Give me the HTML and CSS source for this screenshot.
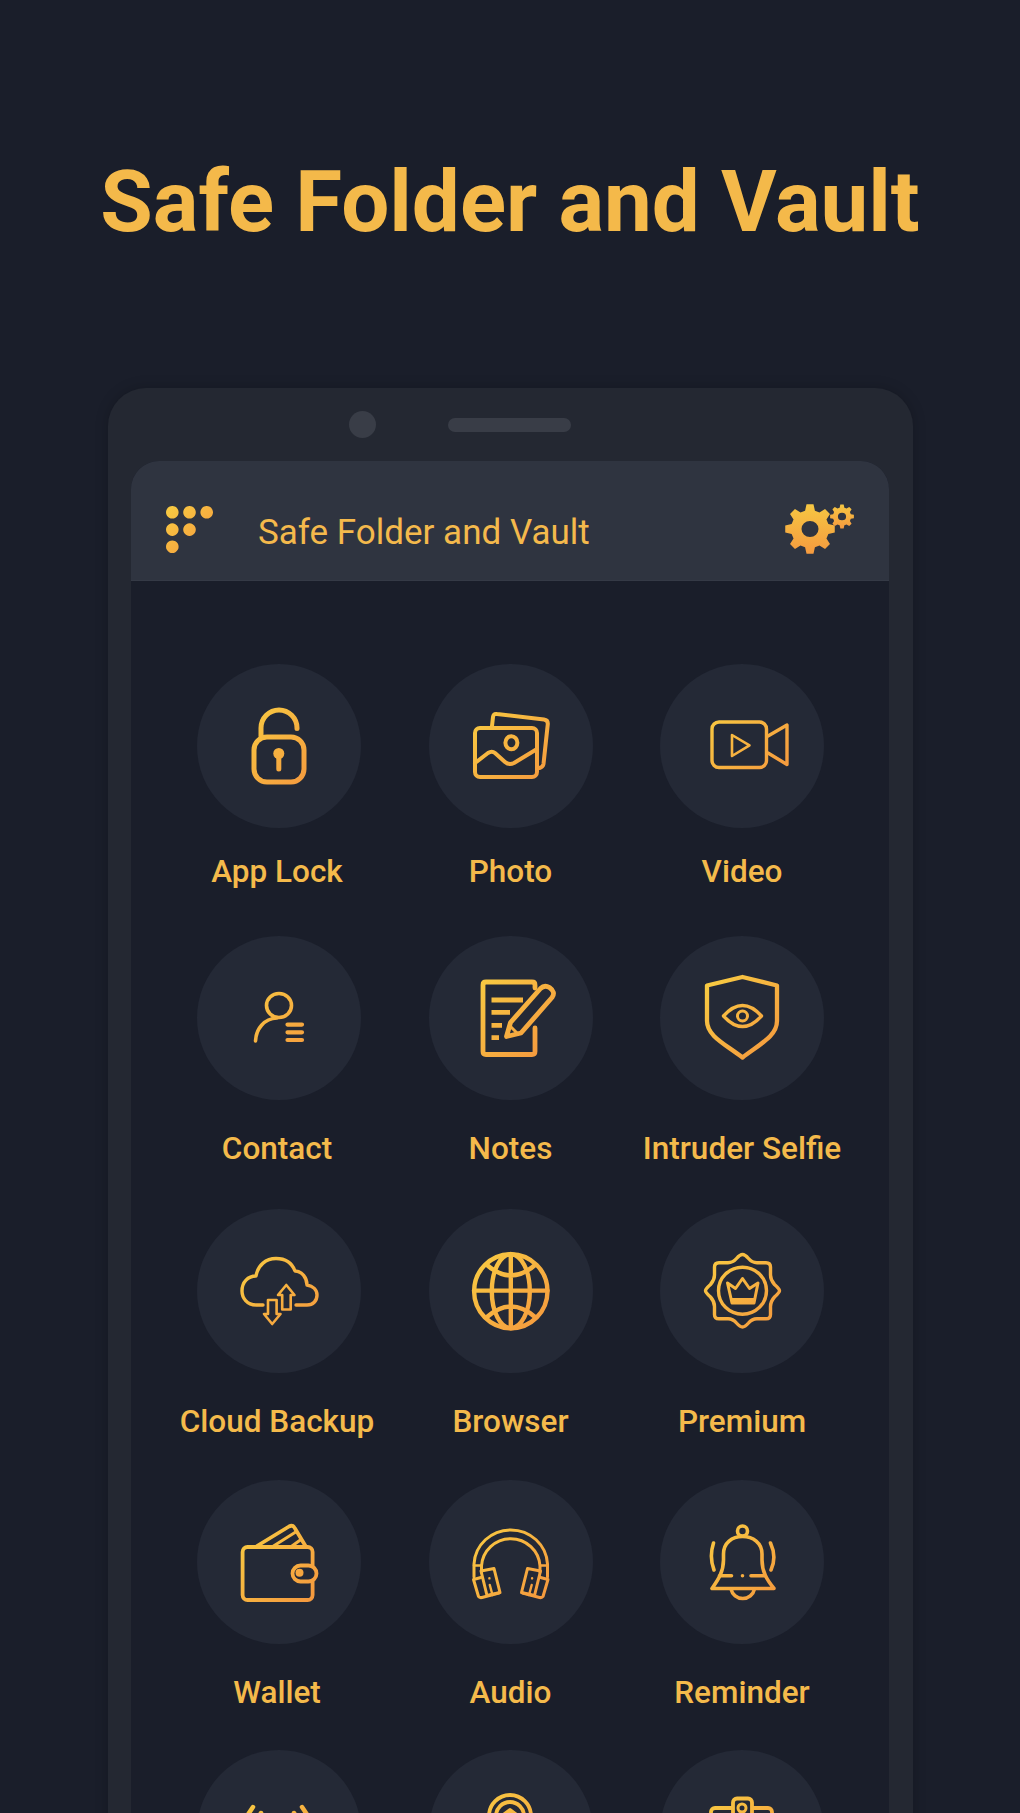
FILE: index.html
```html
<!DOCTYPE html>
<html lang="en">
<head>
  <meta charset="UTF-8">
  <title>Safe Folder and Vault</title>
  <link rel="stylesheet" href="styles.css">
</head>
<body>

  <!-- shared gradients for all the icons -->
  <svg class="defs" width="0" height="0">
    <defs>
      <linearGradient id="gold" gradientUnits="userSpaceOnUse" x1="45" y1="45" x2="120" y2="120">
        <stop offset="0" stop-color="#f8cc42"/>
        <stop offset="1" stop-color="#f5973e"/>
      </linearGradient>
      <linearGradient id="goldDown" x1="0" y1="0" x2="0" y2="1">
        <stop offset="0" stop-color="#f6c742"/>
        <stop offset="1" stop-color="#f59a3f"/>
      </linearGradient>
      <linearGradient id="goldAcross" x1="0" y1="0" x2="1" y2="1">
        <stop offset="0" stop-color="#f8cc42"/>
        <stop offset="1" stop-color="#f5973e"/>
      </linearGradient>
      <path id="gear" fill-rule="evenodd" d="M-4.92-18.35L-3.48-24.76L3.48-24.76L4.92-18.35L9.49-16.45L15.04-19.97L19.97-15.04L16.45-9.49L18.35-4.92L24.76-3.48L24.76 3.48L18.35 4.92L16.45 9.49L19.97 15.04L15.04 19.97L9.49 16.45L4.92 18.35L3.48 24.76L-3.48 24.76L-4.92 18.35L-9.49 16.45L-15.04 19.97L-19.97 15.04L-16.45 9.49L-18.35 4.92L-24.76 3.48L-24.76-3.48L-18.35-4.92L-16.45-9.49L-19.97-15.04L-15.04-19.97L-9.49-16.45ZM-8.5 0a8.5 8 0 1 0 17 0a8.5 8 0 1 0-17 0Z"/>
    </defs>
  </svg>

  <div class="page">
    <h1 class="hero">Safe Folder and Vault</h1>

    <div class="phone">
      <div class="phone-top">
        <span class="camera"></span>
        <span class="speaker"></span>
      </div>

      <div class="screen">
        <header class="appbar">
          <svg class="menu-dots" width="47" height="47" viewBox="0 0 47 47" fill="url(#goldAcross)">
            <path d="M6.3 0a6.3 6.3 0 1 0 .01 0ZM23.5 0a6.3 6.3 0 1 0 .01 0ZM40.7 0a6.3 6.3 0 1 0 .01 0ZM6.3 17.3a6.3 6.3 0 1 0 .01 0ZM23.5 17.3a6.3 6.3 0 1 0 .01 0ZM6.3 34.4a6.3 6.3 0 1 0 .01 0Z"/>
          </svg>
          <span class="appbar-title">Safe Folder and Vault</span>
          <svg class="gears" width="70" height="50" viewBox="0 0 70 50" fill="url(#goldDown)">
            <use href="#gear" transform="translate(25 25)"/>
            <use href="#gear" transform="translate(57 12.5) scale(.48)"/>
          </svg>
        </header>

        <div class="grid">
          <div class="row row-1">
            <div class="tile">
              <div class="bubble">
                <svg class="ico" viewBox="0 0 164 164" stroke="url(#gold)" stroke-width="5">
                  <rect x="57" y="73" width="50" height="45" rx="13"/>
                  <path d="M64 72V64a18 18 0 0 1 36 0v0.5"/>
                  <circle class="solid" cx="81.8" cy="89.5" r="5.5" fill="url(#gold)" stroke="none"/>
                  <path d="M81.8 92V105"/>
                </svg>
              </div>
              <span class="label">App Lock</span>
            </div>
            <div class="tile">
              <div class="bubble">
                <svg class="ico" viewBox="0 0 164 164" stroke="url(#gold)" stroke-width="4">
                  <rect x="46" y="64" width="62" height="49" rx="5"/>
                  <path d="M63 62L64 53Q64.500 49.500 68 50L115 55.500Q119 56 118.800 60L114.500 100Q114 103 110.500 104"/>
                  <path d="M46 99L59 89Q63 86.500 66 89L76 98Q80 101.500 85 99L108 85"/>
                  <ellipse cx="82.400" cy="78.700" rx="6" ry="6.500"/>
                </svg>
              </div>
              <span class="label">Photo</span>
            </div>
            <div class="tile">
              <div class="bubble">
                <svg class="ico" viewBox="0 0 164 164" stroke="url(#gold)" stroke-width="3.400">
                  <rect x="52" y="58" width="54.500" height="45.500" rx="7"/>
                  <path d="M72 71L89.500 81.300L72 92Z" stroke-width="2.600"/>
                  <path d="M108 72L127 61V100.500L108 89"/>
                </svg>
              </div>
              <span class="label">Video</span>
            </div>
          </div>

          <div class="row row-2">
            <div class="tile">
              <div class="bubble">
                <svg class="ico" viewBox="0 0 164 164" stroke="url(#gold)" stroke-width="3.600">
                  <ellipse cx="82" cy="69.500" rx="12.500" ry="12"/>
                  <path d="M58.500 105C59 93 67 82.500 80 82"/>
                  <path d="M90.500 88.600H105M90.500 96.300H105M90.500 104H105" stroke-width="4.200"/>
                </svg>
              </div>
              <span class="label">Contact</span>
            </div>
            <div class="tile">
              <div class="bubble">
                <svg class="ico" viewBox="0 0 164 164" stroke="url(#gold)" stroke-width="4.800">
                  <path d="M106 52V49Q106 46 103 46H57Q54 46 54 49V115.500Q54 118.500 57 118.500H103Q106 118.500 106 115.500V92"/>
                  <path d="M62.500 64H94M62.500 76.300H81M62.500 89.300H73M62.500 101.600H70" stroke-linecap="butt"/>
                  <path d="M77.500 100.500L81.500 86.500L111.500 52.500Q115.500 48.500 120.500 51.500Q127 56 123 61.500L92 97L77.500 100.500Z"/>
                  <path d="M82 91L88 97" stroke-width="3"/>
                </svg>
              </div>
              <span class="label">Notes</span>
            </div>
            <div class="tile">
              <div class="bubble">
                <svg class="ico" viewBox="0 0 164 164" stroke="url(#gold)" stroke-width="4.300">
                  <path d="M82.500 41L117 49.500V85C117 100 100 108 82.500 121.500C65 108 47 100 47 85V49.500Z"/>
                  <path d="M63.500 80Q82.500 59 101.500 80Q82.500 101 63.500 80Z" stroke-width="3.400"/>
                  <circle cx="82.500" cy="80" r="5" stroke-width="3"/>
                </svg>
              </div>
              <span class="label">Intruder Selfie</span>
            </div>
          </div>

          <div class="row row-3">
            <div class="tile">
              <div class="bubble">
                <svg class="ico" viewBox="0 0 164 164" stroke="url(#gold)" stroke-width="3.400">
                  <path d="M66 96H59C50 96 45 89 45 82C45 73 51 67 59 67C61 56 69 49.500 79 49.500C88 49.500 95 54 98 62C105 62 110 69 110 76C116 77 120 81 120 86C120 92 116 96 110 96H99"/>
                  <path d="M89.300 76L97.500 86H93.700V100.500H85.200V86H81Z" stroke-width="2.600"/>
                  <path d="M71 91H79.600V105H83.500L75.200 115L67 105H71Z" stroke-width="2.600"/>
                </svg>
              </div>
              <span class="label">Cloud Backup</span>
            </div>
            <div class="tile">
              <div class="bubble">
                <svg class="ico" viewBox="0 0 164 164" stroke="url(#gold)" stroke-width="4.400">
                  <ellipse cx="81.800" cy="82.200" rx="36.700" ry="37"/>
                  <ellipse cx="81.800" cy="82.200" rx="19" ry="37"/>
                  <path d="M81.800 45V119M45 81.600H118.500M58 56Q82 77 106 56M58 108Q82 87 106 108"/>
                </svg>
              </div>
              <span class="label">Browser</span>
            </div>
            <div class="tile">
              <div class="bubble">
                <svg class="ico" viewBox="0 0 164 164" stroke="url(#gold)" stroke-width="3.400">
                  <path d="M82.500 45.500Q85 45.500 88.500 49.500Q92 53.700 97 53.700H106Q110.500 53.700 110.500 58V66Q110.500 71 114.500 75.500Q119.500 80 119.500 81.700Q119.500 83.400 114.500 88Q110.500 92.500 110.500 97.500V105.500Q110.500 109.800 106 109.800H97Q92 109.800 88.500 114Q85 118 82.500 118Q80 118 76.500 114Q73 109.800 68 109.800H59Q54.500 109.800 54.500 105.500V97.500Q54.500 92.500 50.500 88Q45.500 83.400 45.500 81.700Q45.500 80 50.500 75.500Q54.500 71 54.500 66V58Q54.500 53.700 59 53.700H68Q73 53.700 76.500 49.500Q80 45.500 82.500 45.500Z"/>
                  <ellipse cx="82.500" cy="81.700" rx="24" ry="23.500"/>
                  <path d="M72 94L67.500 74L75.500 79.500L82.500 69.500L89.500 79.500L98 74L94 94Z" stroke-width="3"/>
                  <path d="M72 91.500H94" stroke-width="5" stroke-linecap="butt"/>
                </svg>
              </div>
              <span class="label">Premium</span>
            </div>
          </div>

          <div class="row row-4">
            <div class="tile">
              <div class="bubble">
                <svg class="ico" viewBox="0 0 164 164" stroke="url(#gold)" stroke-width="3.800">
                  <rect x="45.600" y="67" width="70" height="53" rx="5"/>
                  <path d="M60 66L92 46.500Q96 44.500 98 48.500L108.500 66"/>
                  <path d="M76.500 66L99.500 51.500M95 66L104 59.500" stroke-width="3"/>
                  <rect class="clasp" x="95.500" y="85.500" width="24" height="16" rx="8"/>
                  <circle cx="102.500" cy="92.700" r="4" fill="url(#gold)" stroke="none"/>
                </svg>
              </div>
              <span class="label">Wallet</span>
            </div>
            <div class="tile">
              <div class="bubble">
                <svg class="ico" viewBox="0 0 164 164" stroke="url(#gold)" stroke-width="3">
                  <path d="M45 97V84A36.800 36 0 0 1 118.500 84V97"/>
                  <path d="M52.500 92V86A29.300 29 0 0 1 111 86V92"/>
                  <path d="M45 85.500H52M111.500 85.500H118.500" stroke-width="2.500"/>
                  <path d="M52 91L65 88.500L71 112.500L58 115.500Z"/>
                  <path d="M52 97.500L44.500 99.500L49.500 116.500Q50.500 118 53 117.500L70 113"/>
                  <path d="M111.500 91L98.500 88.500L92.500 112.500L105.500 115.500Z"/>
                  <path d="M111.500 97.500L119 99.500L114 116.500Q113 118 110.500 117.500L93.500 113"/>
                  <path d="M60.800 105L63.500 115M102.700 105L100 115M60.400 98.300V98.400M103.100 98.300V98.400" stroke-width="2.400"/>
                </svg>
              </div>
              <span class="label">Audio</span>
            </div>
            <div class="tile">
              <div class="bubble">
                <svg class="ico" viewBox="0 0 164 164" stroke="url(#gold)" stroke-width="3.600">
                  <circle cx="82.500" cy="51" r="5"/>
                  <path d="M52 108.500H114C107 100 102 92 102 80V74C102 63 93 56.500 82.500 56.500C72 56.500 63.500 63 63.500 74V80C63.500 92 58 100 52 108.500Z"/>
                  <path d="M71 109A12 12 0 0 0 94.500 109"/>
                  <path d="M59.500 95.700H71.500M91 95.700H105M82.500 95.700V95.800"/>
                  <path d="M53.500 63Q49 77 54 90M110.500 63Q117 77 111 90"/>
                </svg>
              </div>
              <span class="label">Reminder</span>
            </div>
          </div>

          <div class="row">
            <div class="tile">
              <div class="bubble">
                <svg class="ico" viewBox="0 0 164 164" stroke="url(#gold)" stroke-width="4.500">
                  <path d="M56 57L46 72M105 57L115 72M61 68L64 63M100 68L97 63"/>
                </svg>
              </div>
            </div>
            <div class="tile">
              <div class="bubble">
                <svg class="ico" viewBox="0 0 164 164" stroke="url(#gold)" stroke-width="3.800">
                  <circle cx="81" cy="66" r="21"/>
                  <circle cx="81" cy="66" r="14"/>
                  <path d="M73 66L81 60L89 66"/>
                </svg>
              </div>
            </div>
            <div class="tile">
              <div class="bubble">
                <svg class="ico" viewBox="0 0 164 164" stroke="url(#gold)" stroke-width="3.800">
                  <rect x="51" y="58" width="61" height="30" rx="4"/>
                  <rect class="bump" x="73" y="48.500" width="19" height="30" rx="4"/>
                  <circle cx="82" cy="58" r="4" stroke-width="3"/>
                </svg>
              </div>
            </div>
          </div>
        </div>
      </div>
    </div>
  </div>

</body>
</html>
```

FILE: styles.css
```css
body {
  margin: 0;
  background-color: #1a1e2a;
  font-family: Roboto, "Liberation Sans", sans-serif;
  color: #f4ba4b;
}
.defs {
  display: block;
}
.page {
  height: 1813px;
  overflow: hidden;
}
.hero {
  margin: 0;
  padding-top: 147px;
  height: 388px;
  box-sizing: border-box;
  line-height: 110px;
  font-size: 85.3px;
  font-weight: 700;
  text-align: center;
  color: #f4b94a;
}
.phone {
  width: 758px;
  margin: 0 auto;
  padding: 0 23.5px;
  background-color: #242832;
  border-radius: 38px 38px 0 0;
  box-shadow: 0 0 14px rgba(0,0,0,0.2);
}
.phone-top {
  height: 73px;
  display: flex;
  align-items: center;
  padding-left: 218px;
}
.camera {
  width: 27px;
  height: 27px;
  border-radius: 50%;
  background-color: #393d47;
}
.speaker {
  width: 123px;
  height: 14px;
  margin-left: 72px;
  border-radius: 7px;
  background-color: #393d47;
}
.screen {
  background-color: #1a1e2a;
  border-radius: 28px 28px 0 0;
  padding-bottom: 40px;
}
.appbar {
  height: 96px;
  display: flex;
  align-items: center;
  padding: 23px 0 0 35px;
  background-color: #2f3440;
  border-radius: 28px 28px 0 0;
  border-bottom: 1px solid #353a46;
}
.menu-dots {
  margin-bottom: 6px;
}
.appbar-title {
  margin-left: 45px;
  font-size: 35px;
  color: #f4b94c;
}
.gears {
  margin-left: auto;
  margin-right: 34px;
  margin-bottom: 6px;
}
.grid {
  padding: 83px 0 0 66px;
}
.row {
  display: grid;
  grid-template-columns: repeat(3, 164px);
  column-gap: 67.5px;
}
.row-1 { margin-bottom: 46px; }
.row-2 { margin-bottom: 42px; }
.row-3 { margin-bottom: 40px; }
.row-4 { margin-bottom: 39px; }
.tile {
  display: flex;
  flex-direction: column;
  align-items: center;
}
.tile:first-child .label {
  margin-right: 4px;
}
.bubble {
  width: 164px;
  height: 164px;
  border-radius: 50%;
  background-color: #242936;
}
.ico {
  display: block;
  width: 164px;
  height: 164px;
  fill: none;
  stroke-linecap: round;
  stroke-linejoin: round;
}
.clasp, .bump {
  fill: #242936;
}
.label {
  margin-top: 31px;
  line-height: 36px;
  font-size: 31.5px;
  font-weight: 500;
  white-space: nowrap;
}
.row-1 .label {
  margin-top: 26px;
}
```
